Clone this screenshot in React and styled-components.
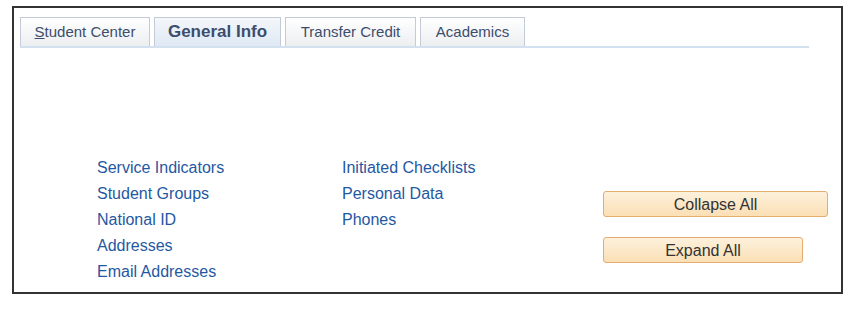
import React from "react";
import styled, { createGlobalStyle } from "styled-components";

const Global = createGlobalStyle`
  html, body {
    margin: 0;
    padding: 0;
    background: #fff;
    font-family: "Liberation Sans", Arial, sans-serif;
  }
`;

const Frame = styled.div`
  margin: 6px 0 0 12px;
  width: 827px;
  height: 284px;
  border: 2px solid #333;
  box-sizing: content-box;
  padding: 0;
`;

const TabBar = styled.div`
  display: flex;
  align-items: flex-end;
  gap: 4px;
  margin: 9px 32px 0 6px;
  border-bottom: 2px solid #d3e0f0;
  height: 29px;
`;

const Tab = styled.div`
  box-sizing: border-box;
  height: 29px;
  width: ${p => p.w}px;
  display: flex;
  align-items: center;
  justify-content: center;
  border: 1px solid #c3cbd6;
  border-bottom: none;
  background: ${p =>
    p.active
      ? "linear-gradient(#f4f7fb, #dfe8f4)"
      : "linear-gradient(#ffffff, #eceef0)"};
  color: #3d4d6b;
  font-size: ${p => (p.active ? "17px" : "15px")};
  font-weight: ${p => (p.active ? "bold" : "normal")};
  padding-bottom: 1px;
  u {
    text-decoration: underline;
  }
`;

const Content = styled.div`
  display: flex;
  margin-top: 107px;
  padding-left: 83px;
`;

const LinkColumn = styled.div`
  display: flex;
  flex-direction: column;
  width: ${p => p.w}px;
`;

const Link = styled.a`
  color: #1f58a3;
  font-size: 16px;
  line-height: 26px;
  text-decoration: none;
  white-space: nowrap;
`;

const ButtonColumn = styled.div`
  display: flex;
  flex-direction: column;
  gap: 20px;
  padding-top: 36px;
`;

const Button = styled.button`
  box-sizing: border-box;
  width: ${p => p.w}px;
  height: 26px;
  border: 1px solid #e3ad72;
  border-radius: 3px;
  background: linear-gradient(#fdf1dc, #fbdfb5);
  color: #333;
  font-family: "Liberation Sans", Arial, sans-serif;
  font-size: 16px;
  padding: 2px 0 0;
  cursor: pointer;
`;

export default function App() {
  return (
    <>
      <Global />
      <Frame>
        <TabBar>
          <Tab w={130}>
            <span><u>S</u>tudent Center</span>
          </Tab>
          <Tab w={127} active>General Info</Tab>
          <Tab w={131}>Transfer Credit</Tab>
          <Tab w={105}>Academics</Tab>
        </TabBar>
        <Content>
          <LinkColumn w={245}>
            <Link href="#">Service Indicators</Link>
            <Link href="#">Student Groups</Link>
            <Link href="#">National ID</Link>
            <Link href="#">Addresses</Link>
            <Link href="#">Email Addresses</Link>
          </LinkColumn>
          <LinkColumn w={261}>
            <Link href="#">Initiated Checklists</Link>
            <Link href="#">Personal Data</Link>
            <Link href="#">Phones</Link>
          </LinkColumn>
          <ButtonColumn>
            <Button w={225}>Collapse All</Button>
            <Button w={200}>Expand All</Button>
          </ButtonColumn>
        </Content>
      </Frame>
    </>
  );
}
